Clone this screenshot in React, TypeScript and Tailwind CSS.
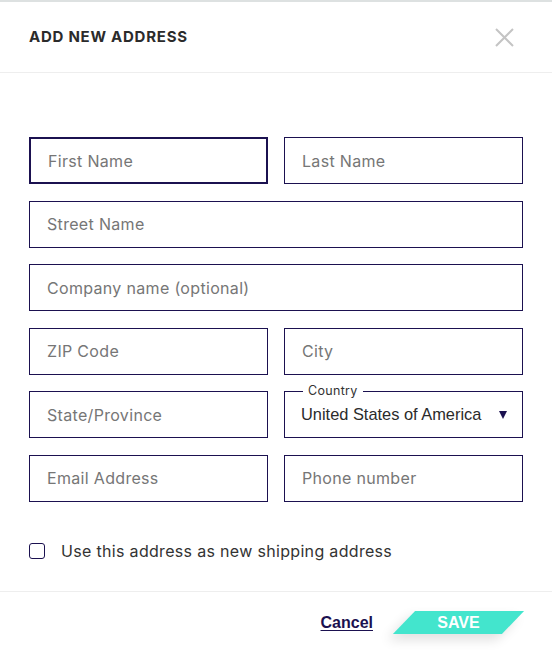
import { useState } from "react";

const font = { fontFamily: "Inter, 'Noto Sans', sans-serif", letterSpacing: "0.02em" };
const arial = { fontFamily: "'Liberation Sans', Arial, sans-serif", letterSpacing: "normal" };

const Field = ({ placeholder, focused = false }: { placeholder: string; focused?: boolean }) => (
  <input
    placeholder={placeholder}
    className={`h-[47px] w-full bg-white px-[17px] text-[16px] outline-none placeholder:text-[#767676] ${
      focused
        ? "border-2 border-[#1b1150] placeholder:text-[#1b1150]"
        : "border border-[#1b1150]"
    }`}
    style={font}
  />
);

export default function App() {
  const [checked, setChecked] = useState(false);

  return (
    <div className="h-[650px] w-[552px] overflow-hidden border-t-2 border-[#dde1e1] bg-white" style={font}>
      {/* Header */}
      <div className="flex h-[71px] items-center justify-between border-b border-[#eeeeee] pl-[29px] pr-[38px]">
        <h2 className="pt-[1px] text-[15px] font-bold tracking-[0.05em] text-[#2b2b2b]">ADD NEW ADDRESS</h2>
        <button className="text-[#c4c4c4]" aria-label="Close">
          <svg width="19" height="19" viewBox="0 0 19 19" fill="none" stroke="currentColor" strokeWidth="2">
            <path d="M1 1L18 18M18 1L1 18" />
          </svg>
        </button>
      </div>

      {/* Form */}
      <div className="grid grid-cols-2 gap-x-[16px] gap-y-[16.5px] px-[29px] pt-[64px]">
        <Field placeholder="First Name" focused />
        <Field placeholder="Last Name" />
        <div className="col-span-2">
          <Field placeholder="Street Name" />
        </div>
        <div className="col-span-2">
          <Field placeholder="Company name (optional)" />
        </div>
        <Field placeholder="ZIP Code" />
        <Field placeholder="City" />
        <Field placeholder="State/Province" />
        <div className="relative flex h-[47px] items-center justify-between border border-[#1b1150] pl-[16px] pr-[15px]">
          <span className="absolute left-[18px] top-[-8px] bg-white px-[5px] text-[12.5px] leading-[14px] text-[#333]">
            Country
          </span>
          <span className="text-[16.4px] text-[#2b2b2b]" style={arial}>
            United States of America
          </span>
          <svg width="8" height="8" viewBox="0 0 8 8">
            <path d="M0 0H8L4 8Z" fill="#1b1150" />
          </svg>
        </div>
        <Field placeholder="Email Address" />
        <Field placeholder="Phone number" />
      </div>

      {/* Checkbox */}
      <label className="mt-[37px] flex cursor-pointer items-center gap-[16px] pl-[29px]">
        <span
          onClick={() => setChecked(!checked)}
          className={`h-[16px] w-[16px] rounded-[3px] border-[1.5px] border-[#1b1150] ${checked ? "bg-[#1b1150]" : "bg-white"}`}
        />
        <span className="text-[16px] text-[#333]">Use this address as new shipping address</span>
      </label>

      {/* Footer */}
      <div className="mt-[28px] flex items-center justify-end gap-[20px] border-t border-[#eeeeee] pr-[28px] pt-[19px]">
        <button className="text-[16px] font-bold text-[#1b1150] underline underline-offset-2" style={arial}>
          Cancel
        </button>
        <button className="relative flex h-[23px] w-[131px] items-center justify-center">
          <span className="absolute inset-y-0 left-[11px] right-[11px] -skew-x-[44deg] bg-[#43e5cd] shadow-[0_6px_10px_rgba(0,0,0,0.12)]" />
          <span className="relative text-[16px] font-bold text-white" style={arial}>
            SAVE
          </span>
        </button>
      </div>
    </div>
  );
}
